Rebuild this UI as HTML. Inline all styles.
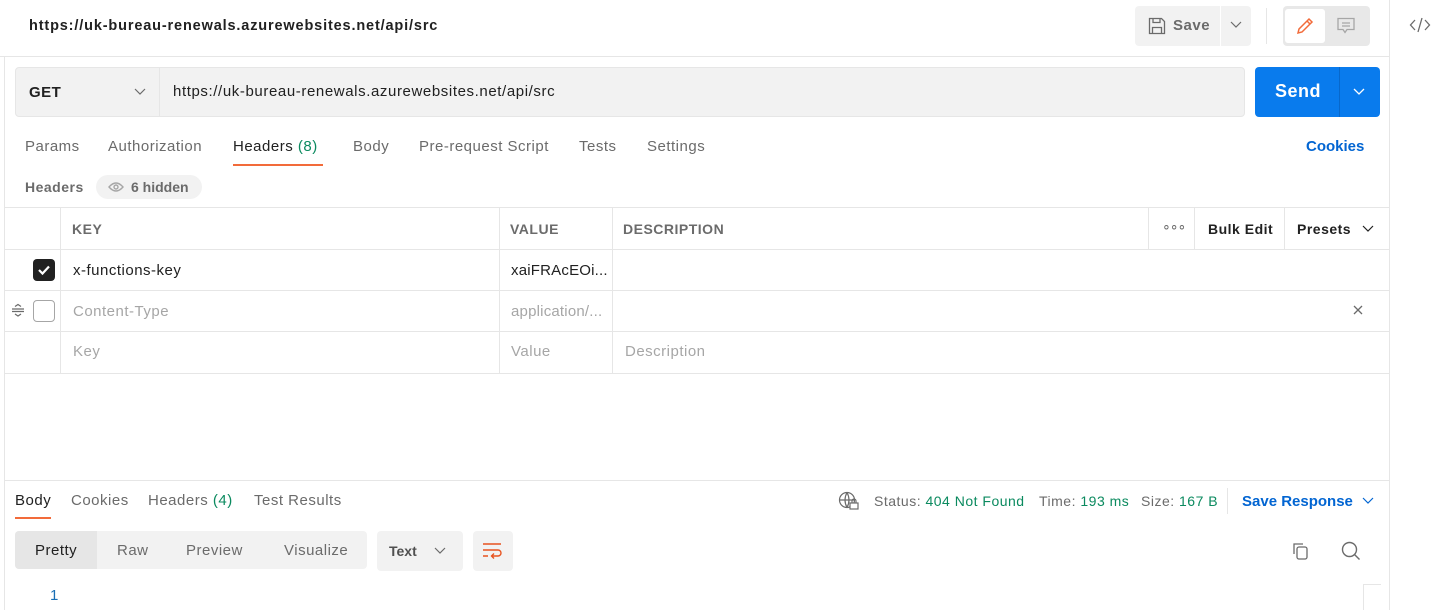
<!DOCTYPE html>
<html><head><style>
*{box-sizing:border-box;margin:0;padding:0}
body{width:1450px;height:610px;overflow:hidden;background:#fff;font-family:"Liberation Sans",sans-serif;font-size:14px;color:#212121;position:relative;letter-spacing:0.5px}
.a{position:absolute}
.g{color:#6b6b6b}
.lg{color:#a6a6a6}
.hl{position:absolute;height:1px;background:#e6e6e6}
.vl{position:absolute;width:1px;background:#e6e6e6}
.th{font-weight:bold;color:#6b6b6b;font-size:14px}
</style></head><body>
<div class="a" style="left:29px;top:18px;font-weight:bold;font-size:14.5px;letter-spacing:0.85px">https://uk-bureau-renewals.azurewebsites.net/api/src</div>
<div class="a" style="left:1135px;top:6px;width:85px;height:40px;background:#f2f2f2;border-radius:4px 0 0 4px"></div>
<svg class="a" style="left:1147px;top:16px" width="20" height="20" viewBox="0 0 20 20" fill="none" stroke="#6b6b6b" stroke-width="1.3"><path d="M2.5 2.5h12l3 3v12h-15z"/><path d="M6 2.5v4h7v-4M5.5 17.5v-6h9v6"/></svg>
<div class="a" style="left:1173px;top:17px;font-size:15px;font-weight:bold;color:#6b6b6b">Save</div>
<div class="a" style="left:1221px;top:6px;width:30px;height:40px;background:#f2f2f2;border-radius:0 4px 4px 0"></div>
<svg class="a" style="left:1230px;top:21px" width="12" height="8"><path d="M1 1l5 5 5-5" fill="none" stroke="#6b6b6b" stroke-width="1.2"/></svg>
<div class="vl" style="left:1266px;top:8px;height:36px"></div>
<div class="a" style="left:1283px;top:6px;width:87px;height:40px;background:#e8e8e8;border-radius:4px"></div>
<div class="a" style="left:1285px;top:9px;width:40px;height:34px;background:#fff;border-radius:3px"></div>
<svg class="a" style="left:1295px;top:16px" width="20" height="20" viewBox="0 0 20 20" fill="none" stroke="#f26b3a" stroke-width="1.5"><path d="M3 17l1-4L14 3l3 3L7 16z M12 5l3 3"/></svg>
<svg class="a" style="left:1336px;top:17px" width="20" height="18" viewBox="0 0 20 18" fill="none" stroke="#a6a6a6" stroke-width="1.3"><path d="M2 1.5h16v11H11l-2 3-2-3H2z M6 6h8M6 9h8"/></svg>
<div class="vl" style="left:1389px;top:0;height:610px"></div>
<svg class="a" style="left:1409px;top:17px" width="22" height="16" viewBox="0 0 22 16" fill="none" stroke="#6b6b6b" stroke-width="1.3"><path d="M6 3L1.5 8 6 13M16 3l4.5 5L16 13M13 1L9 15"/></svg>
<div class="hl" style="left:0;top:56px;width:1389px"></div>
<div class="vl" style="left:4px;top:56px;height:554px"></div>
<div class="a" style="left:15px;top:67px;width:1230px;height:50px;background:#f2f2f2;border:1px solid #e6e6e6;border-radius:4px"></div>
<div class="vl" style="left:159px;top:68px;height:48px"></div>
<div class="a" style="left:29px;top:84px;font-weight:bold;font-size:15px">GET</div>
<svg class="a" style="left:134px;top:88px" width="12" height="8"><path d="M1 1l5 5 5-5" fill="none" stroke="#6b6b6b" stroke-width="1.2"/></svg>
<div class="a" style="left:173px;top:83px;font-size:15px;letter-spacing:0.6px">https://uk-bureau-renewals.azurewebsites.net/api/src</div>
<div class="a" style="left:1255px;top:67px;width:125px;height:50px;background:#097bed;border-radius:4px"></div>
<div class="a" style="left:1339px;top:67px;width:1px;height:50px;background:#0768cc"></div>
<div class="a" style="left:1275px;top:81px;font-size:18px;font-weight:bold;color:#fff">Send</div>
<svg class="a" style="left:1353px;top:88px" width="12" height="8"><path d="M1 1l5 5 5-5" fill="none" stroke="#fff" stroke-width="1.3"/></svg>
<div class="a g" style="left:25px;top:138px;font-size:15px">Params</div>
<div class="a g" style="left:108px;top:138px;font-size:15px">Authorization</div>
<div class="a" style="left:233px;top:138px;font-size:15px">Headers <span style="color:#0b8a5f">(8)</span></div>
<div class="a" style="left:233px;top:164px;width:90px;height:2px;background:#f26b3a"></div>
<div class="a g" style="left:353px;top:138px;font-size:15px">Body</div>
<div class="a g" style="left:419px;top:138px;font-size:15px">Pre-request Script</div>
<div class="a g" style="left:579px;top:138px;font-size:15px">Tests</div>
<div class="a g" style="left:647px;top:138px;font-size:15px">Settings</div>
<div class="a" style="left:1306px;top:138px;font-size:15px;font-weight:bold;color:#0265d2;letter-spacing:0">Cookies</div>
<div class="a" style="left:25px;top:179px;font-weight:bold;color:#6b6b6b">Headers</div>
<div class="a" style="left:96px;top:175px;width:106px;height:24px;background:#f2f2f2;border-radius:12px"></div>
<svg class="a" style="left:108px;top:182px" width="16" height="10" viewBox="0 0 16 10" fill="none" stroke="#a6a6a6" stroke-width="1.4"><path d="M1 5q7-8 14 0q-7 8-14 0z"/><circle cx="8" cy="5" r="2"/></svg>
<div class="a" style="left:131px;top:179px;font-weight:bold;color:#6b6b6b;font-size:14px;letter-spacing:0">6 hidden</div>
<div class="hl" style="left:4px;top:207px;width:1385px"></div>
<div class="hl" style="left:4px;top:249px;width:1385px"></div>
<div class="hl" style="left:4px;top:290px;width:1385px"></div>
<div class="hl" style="left:4px;top:331px;width:1385px"></div>
<div class="hl" style="left:4px;top:373px;width:1385px"></div>
<div class="vl" style="left:60px;top:208px;height:165px"></div>
<div class="vl" style="left:499px;top:208px;height:165px"></div>
<div class="vl" style="left:612px;top:208px;height:165px"></div>
<div class="vl" style="left:1148px;top:208px;height:41px"></div>
<div class="vl" style="left:1194px;top:208px;height:41px"></div>
<div class="vl" style="left:1284px;top:208px;height:41px"></div>
<div class="a th" style="left:72px;top:221px">KEY</div>
<div class="a th" style="left:510px;top:221px">VALUE</div>
<div class="a th" style="left:623px;top:221px">DESCRIPTION</div>
<div class="a" style="left:1162px;top:218px;font-size:14px;color:#6b6b6b;letter-spacing:-1px">∘∘∘</div>
<div class="a" style="left:1208px;top:221px;font-weight:bold;color:#212121">Bulk Edit</div>
<div class="a" style="left:1297px;top:221px;font-weight:bold;color:#212121">Presets</div>
<svg class="a" style="left:1362px;top:225px" width="12" height="8"><path d="M1 1l5 5 5-5" fill="none" stroke="#212121" stroke-width="1.2"/></svg>
<div class="a" style="left:33px;top:259px;width:22px;height:22px;background:#212121;border-radius:4px"></div>
<svg class="a" style="left:37px;top:263px" width="14" height="14"><path d="M2 7l3.5 3.5L12 3.5" fill="none" stroke="#fff" stroke-width="2.2"/></svg>
<div class="a" style="left:73px;top:262px;font-size:15px">x-functions-key</div>
<div class="a" style="left:511px;top:262px;font-size:15px;letter-spacing:0.2px">xaiFRAcEOi...</div>
<svg class="a" style="left:11px;top:303px" width="14" height="14" viewBox="0 0 14 14" fill="none" stroke="#6b6b6b" stroke-width="1.2"><path d="M1 6h12M1 8.5h12M4 3.5l3-2 3 2M4 11l3 2 3-2"/></svg>
<div class="a" style="left:33px;top:300px;width:22px;height:22px;border:1px solid #a6a6a6;border-radius:4px"></div>
<div class="a lg" style="left:73px;top:303px;font-size:15px">Content-Type</div>
<div class="a lg" style="left:511px;top:303px;font-size:15px;letter-spacing:0.2px">application/...</div>
<svg class="a" style="left:1353px;top:305px" width="10" height="10"><path d="M1 1l8 8M9 1l-8 8" stroke="#6b6b6b" stroke-width="1.3"/></svg>
<div class="a lg" style="left:73px;top:343px;font-size:15px">Key</div>
<div class="a lg" style="left:511px;top:343px;font-size:15px">Value</div>
<div class="a lg" style="left:625px;top:343px;font-size:15px">Description</div>
<div class="hl" style="left:4px;top:480px;width:1385px"></div>
<div class="a" style="left:15px;top:492px;font-size:15px">Body</div>
<div class="a" style="left:15px;top:517px;width:36px;height:2px;background:#f26b3a"></div>
<div class="a g" style="left:71px;top:492px;font-size:15px">Cookies</div>
<div class="a g" style="left:148px;top:492px;font-size:15px">Headers <span style="color:#0b8a5f">(4)</span></div>
<div class="a g" style="left:254px;top:492px;font-size:15px">Test Results</div>
<svg class="a" style="left:838px;top:491px" width="22" height="20" viewBox="0 0 22 20" fill="none" stroke="#6b6b6b" stroke-width="1.2"><circle cx="9" cy="9" r="7.5"/><path d="M1.5 9h15M9 1.5q-4 7.5 0 15M9 1.5q4 7.5 0 15"/><rect x="12" y="12" width="8" height="6" fill="#fff"/><path d="M14 12v-2a2 2 0 0 1 4 0v2"/></svg>
<div class="a g" style="left:874px;top:493px">Status: <span style="color:#0b8a5f">404 Not Found</span></div>
<div class="a g" style="left:1039px;top:493px">Time: <span style="color:#0b8a5f">193 ms</span></div>
<div class="a g" style="left:1141px;top:493px">Size: <span style="color:#0b8a5f">167 B</span></div>
<div class="vl" style="left:1227px;top:488px;height:26px"></div>
<div class="a" style="left:1242px;top:493px;font-size:15px;font-weight:bold;color:#0265d2;letter-spacing:0">Save Response</div>
<svg class="a" style="left:1362px;top:497px" width="12" height="8"><path d="M1 1l5 5 5-5" fill="none" stroke="#0265d2" stroke-width="1.2"/></svg>
<div class="a" style="left:15px;top:531px;width:352px;height:38px;background:#f2f2f2;border-radius:4px"></div>
<div class="a" style="left:15px;top:531px;width:82px;height:38px;background:#e6e6e6;border-radius:4px 0 0 4px"></div>
<div class="a" style="left:35px;top:542px;font-size:15px">Pretty</div>
<div class="a g" style="left:117px;top:542px;font-size:15px">Raw</div>
<div class="a g" style="left:186px;top:542px;font-size:15px">Preview</div>
<div class="a g" style="left:284px;top:542px;font-size:15px">Visualize</div>
<div class="a" style="left:377px;top:531px;width:86px;height:40px;background:#f2f2f2;border-radius:4px"></div>
<div class="a" style="left:389px;top:543px;font-weight:bold;color:#505050;letter-spacing:0">Text</div>
<svg class="a" style="left:434px;top:547px" width="12" height="8"><path d="M1 1l5 5 5-5" fill="none" stroke="#6b6b6b" stroke-width="1.2"/></svg>
<div class="a" style="left:473px;top:531px;width:40px;height:40px;background:#f2f2f2;border-radius:4px"></div>
<svg class="a" style="left:482px;top:542px" width="22" height="18" viewBox="0 0 22 18" fill="none" stroke="#e8531f" stroke-width="1.4"><path d="M1 2h18M1 8h15a3 3 0 0 1 0 6h-6M12 11.5l-2.5 2.5 2.5 2.5M1 14h5"/></svg>
<svg class="a" style="left:1290px;top:541px" width="20" height="20" viewBox="0 0 20 20" fill="none" stroke="#6b6b6b" stroke-width="1.3"><path d="M4 13V3h9"/><rect x="7" y="6" width="10" height="12" rx="2"/></svg>
<svg class="a" style="left:1340px;top:540px" width="22" height="22" viewBox="0 0 22 22" fill="none" stroke="#6b6b6b" stroke-width="1.4"><circle cx="9.5" cy="9.5" r="7"/><path d="M14.5 14.5l5 5"/></svg>
<div class="a" style="left:50px;top:587px;color:#1a6fb5;font-size:15px">1</div>
<div class="a" style="left:1363px;top:584px;width:18px;height:26px;border-left:1px solid #e6e6e6;border-top:1px solid #e6e6e6"></div>
</body></html>
